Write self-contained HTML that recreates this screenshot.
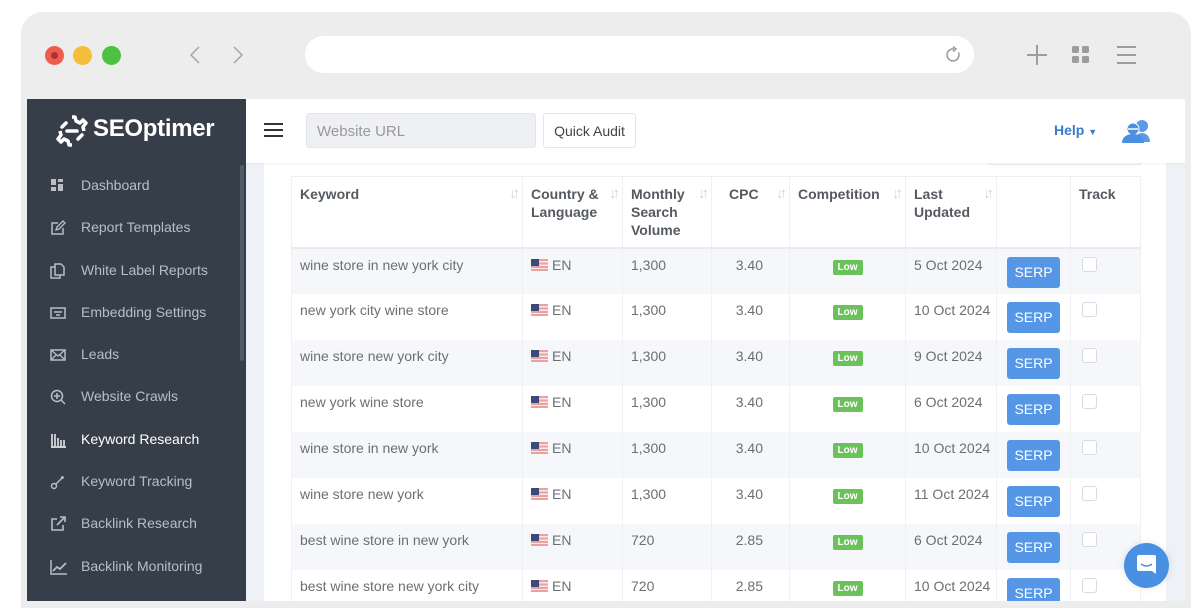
<!DOCTYPE html>
<html><head><meta charset="utf-8">
<style>
*{box-sizing:border-box;margin:0;padding:0}
html,body{width:1200px;height:608px;overflow:hidden}
body{background:#fff;font-family:"Liberation Sans",sans-serif;position:relative}
.win{position:absolute;left:21px;top:12px;width:1170px;height:596px;background:#ededed;border-radius:22px 22px 0 0}
.dot{position:absolute;top:46px;width:19px;height:19px;border-radius:50%}
.addr{position:absolute;left:305px;top:36px;width:669px;height:37px;background:#fff;border-radius:19px}
.side{position:absolute;left:27px;top:99px;width:219px;height:502px;background:#363f49}
.main{position:absolute;left:246px;top:99px;width:939px;height:502px;background:#eef1f5;overflow:hidden}
.hdr{position:absolute;left:0;top:0;width:939px;height:64px;background:#fff;box-shadow:0 1px 2px rgba(0,0,0,.06);z-index:2}
.card{position:absolute;left:18px;top:64px;width:902px;height:460px;background:#fff}
.nav{position:absolute;left:0;width:219px;height:42px;color:#b9bec5;font-size:14px;white-space:nowrap}
.nav svg{position:absolute;left:23px;top:13px}
.nav span{position:absolute;left:54px;top:12px}
table{position:absolute;left:27px;top:13px;border-collapse:collapse;table-layout:fixed;width:849px;font-size:14px;color:#6b6f74;white-space:nowrap}
th{height:68px;vertical-align:top;text-align:left;padding:8px 8px;font-weight:bold;color:#555a60;border:1px solid #eef0f2;line-height:18px;position:relative;border-bottom:2px solid #e8ebee}
td{height:46px;vertical-align:top;padding:8px 8px;border-left:1px solid #eef0f2;border-right:1px solid #eef0f2;overflow:hidden}
tr.o td{background:#f5f7fa}
.sa{position:absolute;right:6px;top:8px;color:#cfd3d7;font-size:15px;letter-spacing:-4px;font-weight:normal}
.flag{display:inline-block;width:17px;height:12px;vertical-align:-1px;margin-right:4px;background:repeating-linear-gradient(#e9a2a2 0 2px,#fbe5e5 2px 3.4px);position:relative}
.flag:before{content:"";position:absolute;left:0;top:0;width:8px;height:7px;background:#3b4a78}
.low{display:inline-block;background:#6cc25a;color:#fff;font-size:10px;font-weight:bold;padding:2px 5px;border-radius:2px;margin-top:2px}
td.s{padding:0 0 0 10px;vertical-align:top}
.serp{display:inline-block;background:#5596e6;color:#fff;font-size:14px;width:53px;height:31px;line-height:31px;text-align:center;border-radius:3px;margin-top:8px}
.cb{display:inline-block;width:15px;height:15px;border:1px solid #d7dade;border-radius:3px;background:#fff;margin-left:3px}
</style></head><body>
<div class="win"></div>
<div class="dot" style="left:45px;background:#ee5c50"><div style="position:absolute;left:6px;top:6px;width:7px;height:7px;border-radius:50%;background:#a8352d"></div></div>
<div class="dot" style="left:73px;background:#f4bd3c"></div>
<div class="dot" style="left:102px;background:#4fc03f"></div>
<svg style="position:absolute;left:188px;top:46px" width="60" height="18"><path d="M11 1L3 9L11 17" stroke="#a5a5a5" stroke-width="1.5" fill="none"/><path d="M46 1L54 9L46 17" stroke="#a5a5a5" stroke-width="1.5" fill="none"/></svg>
<div class="addr"></div>
<svg style="position:absolute;left:945px;top:46px" width="18" height="18"><path d="M13.5 6.5A6 6 0 1 1 9 3" stroke="#999" stroke-width="1.5" fill="none"/><path d="M8 0.5L11 3L8 5.5" stroke="#999" stroke-width="1.5" fill="none"/></svg>
<svg style="position:absolute;left:1026px;top:44px" width="120" height="22"><path d="M11 1V21M1 11H21" stroke="#9d9d9d" stroke-width="2"/><rect x="46" y="2" width="7" height="7" rx="1.5" fill="#9d9d9d"/><rect x="56" y="2" width="7" height="7" rx="1.5" fill="#9d9d9d"/><rect x="46" y="12" width="7" height="7" rx="1.5" fill="#9d9d9d"/><rect x="56" y="12" width="7" height="7" rx="1.5" fill="#9d9d9d"/><path d="M91 3H110M91 11H110M91 19H110" stroke="#9d9d9d" stroke-width="2"/></svg>

<div class="side">
<svg style="position:absolute;left:27px;top:14px" width="36" height="36" viewBox="0 0 36 36"><path d="M18 4 L21 4 L22 8 L26 10 L29 7 L32 10 L29 14 L30 18" stroke="#fff" stroke-width="3.5" fill="none" stroke-linejoin="round"/><path d="M18 32 L15 32 L14 28 L10 26 L7 29 L4 26 L7 22 L6 18" stroke="#fff" stroke-width="3.5" fill="none" stroke-linejoin="round"/><path d="M12 10 L8 14 M24 26 L28 22 M13 18h10" stroke="#fff" stroke-width="3.5" stroke-linecap="round"/></svg>
<div style="position:absolute;left:66px;top:16px;color:#fff;font-size:24px;font-weight:bold;letter-spacing:-0.3px">SEOptimer</div>
<div style="position:absolute;left:213px;top:66px;width:4px;height:196px;background:#525b66;border-radius:2px"></div>
<div class="nav" style="top:66px"><svg width="14" height="14"><rect x="1" y="1" width="5" height="6" fill="#b9bec5"/><rect x="8" y="1" width="5" height="3" fill="#b9bec5"/><rect x="1" y="9" width="5" height="4" fill="#b9bec5"/><rect x="8" y="6" width="5" height="7" fill="#b9bec5"/></svg><span>Dashboard</span></div>
<div class="nav" style="top:108px"><svg width="16" height="16"><path d="M13 8v6H2V3h6" stroke="#b9bec5" stroke-width="1.5" fill="none"/><path d="M6 10l1-3 6-6 2 2-6 6z" stroke="#b9bec5" stroke-width="1.3" fill="none"/></svg><span>Report Templates</span></div>
<div class="nav" style="top:151px"><svg width="16" height="16"><path d="M5 4H1v11h9v-3" stroke="#b9bec5" stroke-width="1.5" fill="none"/><path d="M5 1h6l3 3v8H5z" stroke="#b9bec5" stroke-width="1.5" fill="none"/></svg><span>White Label Reports</span></div>
<div class="nav" style="top:193px"><svg width="16" height="16"><rect x="1" y="3" width="14" height="10" stroke="#b9bec5" stroke-width="1.5" fill="none"/><path d="M4 7h8M6 10h4" stroke="#b9bec5" stroke-width="1.5"/></svg><span>Embedding Settings</span></div>
<div class="nav" style="top:235px"><svg width="16" height="16"><rect x="1" y="3" width="14" height="10" stroke="#b9bec5" stroke-width="1.5" fill="none"/><path d="M1 3l7 6 7-6M1 13l5-5M15 13l-5-5" stroke="#b9bec5" stroke-width="1.3" fill="none"/></svg><span>Leads</span></div>
<div class="nav" style="top:277px"><svg width="16" height="16"><circle cx="7" cy="7" r="5.5" stroke="#b9bec5" stroke-width="1.5" fill="none"/><path d="M11 11l4 4M7 4v6M4 7h6" stroke="#b9bec5" stroke-width="1.5"/></svg><span>Website Crawls</span></div>
<div class="nav" style="top:320px;color:#fff"><svg width="16" height="16"><path d="M1 15h15M2 2v12M5 2v12M8 6v8M11 8v6M14 8v6" stroke="#fff" stroke-width="1.4"/></svg><span>Keyword Research</span></div>
<div class="nav" style="top:362px"><svg width="16" height="16"><circle cx="4" cy="12" r="2.5" stroke="#b9bec5" stroke-width="1.4" fill="none"/><path d="M6 10l7-7M11 3h2v2" stroke="#b9bec5" stroke-width="1.4" fill="none"/></svg><span>Keyword Tracking</span></div>
<div class="nav" style="top:404px"><svg width="16" height="16"><path d="M13 9v5H2V3h5" stroke="#b9bec5" stroke-width="1.6" fill="none"/><path d="M7 9l7-7M10 1h5v5" stroke="#b9bec5" stroke-width="1.6" fill="none"/></svg><span>Backlink Research</span></div>
<div class="nav" style="top:447px"><svg width="18" height="16"><path d="M1 1v14h16" stroke="#b9bec5" stroke-width="1.5" fill="none"/><path d="M3 12l4-4 3 2 6-6" stroke="#b9bec5" stroke-width="1.8" fill="none"/></svg><span>Backlink Monitoring</span></div>
</div>

<div class="main">
<div class="card">
<div style="position:absolute;left:724px;top:-2px;width:154px;height:4px;border:1px solid #e5e8eb;border-top:none;border-radius:0 0 4px 4px"></div>
<table>
<colgroup><col style="width:231px"><col style="width:100px"><col style="width:89px"><col style="width:78px"><col style="width:116px"><col style="width:91px"><col style="width:74px"><col style="width:70px"></colgroup>
<tr><th>Keyword<span class="sa">↓↑</span></th><th>Country &amp;<br>Language<span class="sa">↓↑</span></th><th>Monthly<br>Search<br>Volume<span class="sa">↓↑</span></th><th style="padding-left:17px">CPC<span class="sa">↓↑</span></th><th>Competition<span class="sa">↓↑</span></th><th>Last<br>Updated<span class="sa">↓↑</span></th><th></th><th>Track</th></tr>
<tr class="o"><td>wine store in new york city</td><td><span class="flag"></span>EN</td><td>1,300</td><td style="text-align:right;padding-right:26px">3.40</td><td style="text-align:center"><span class="low">Low</span></td><td>5 Oct 2024</td><td class="s"><span class="serp">SERP</span></td><td><span class="cb"></span></td></tr>
<tr><td>new york city wine store</td><td><span class="flag"></span>EN</td><td>1,300</td><td style="text-align:right;padding-right:26px">3.40</td><td style="text-align:center"><span class="low">Low</span></td><td>10 Oct 2024</td><td class="s"><span class="serp">SERP</span></td><td><span class="cb"></span></td></tr>
<tr class="o"><td>wine store new york city</td><td><span class="flag"></span>EN</td><td>1,300</td><td style="text-align:right;padding-right:26px">3.40</td><td style="text-align:center"><span class="low">Low</span></td><td>9 Oct 2024</td><td class="s"><span class="serp">SERP</span></td><td><span class="cb"></span></td></tr>
<tr><td>new york wine store</td><td><span class="flag"></span>EN</td><td>1,300</td><td style="text-align:right;padding-right:26px">3.40</td><td style="text-align:center"><span class="low">Low</span></td><td>6 Oct 2024</td><td class="s"><span class="serp">SERP</span></td><td><span class="cb"></span></td></tr>
<tr class="o"><td>wine store in new york</td><td><span class="flag"></span>EN</td><td>1,300</td><td style="text-align:right;padding-right:26px">3.40</td><td style="text-align:center"><span class="low">Low</span></td><td>10 Oct 2024</td><td class="s"><span class="serp">SERP</span></td><td><span class="cb"></span></td></tr>
<tr><td>wine store new york</td><td><span class="flag"></span>EN</td><td>1,300</td><td style="text-align:right;padding-right:26px">3.40</td><td style="text-align:center"><span class="low">Low</span></td><td>11 Oct 2024</td><td class="s"><span class="serp">SERP</span></td><td><span class="cb"></span></td></tr>
<tr class="o"><td>best wine store in new york</td><td><span class="flag"></span>EN</td><td>720</td><td style="text-align:right;padding-right:26px">2.85</td><td style="text-align:center"><span class="low">Low</span></td><td>6 Oct 2024</td><td class="s"><span class="serp">SERP</span></td><td><span class="cb"></span></td></tr>
<tr><td>best wine store new york city</td><td><span class="flag"></span>EN</td><td>720</td><td style="text-align:right;padding-right:26px">2.85</td><td style="text-align:center"><span class="low">Low</span></td><td>10 Oct 2024</td><td class="s"><span class="serp">SERP</span></td><td><span class="cb"></span></td></tr>
</table>
</div>
<div class="hdr">
<svg style="position:absolute;left:18px;top:23px" width="20" height="16"><path d="M0 2H19M0 8H19M0 14H19" stroke="#333" stroke-width="2"/></svg>
<div style="position:absolute;left:60px;top:14px;width:230px;height:35px;background:#eef0f3;border:1px solid #e3e6ea;border-radius:3px;color:#999;font-size:15px;padding:9px 10px;white-space:nowrap">Website URL</div>
<div style="position:absolute;left:297px;top:14px;width:93px;height:35px;border:1px solid #e3e6ea;border-radius:3px;color:#444;font-size:14px;padding:9px 0;text-align:center;white-space:nowrap">Quick Audit</div>
<div style="position:absolute;left:808px;top:23px;color:#3a7bc8;font-size:14px;font-weight:bold;white-space:nowrap">Help <span style="font-size:9px">▼</span></div>
<svg style="position:absolute;left:875px;top:19px" width="30" height="26"><circle cx="21" cy="8" r="6" fill="#5a9be8"/><path d="M13 24c0-6 4-9 8-9s8 3 8 9z" fill="#5a9be8"/><circle cx="12" cy="11" r="6.5" fill="#fff"/><circle cx="12" cy="11" r="5.5" fill="#4a8fe0"/><path d="M7 11h10" stroke="#fff" stroke-width="1.5"/><path d="M1 25c0-6 5-9 11-9s11 3 11 9z" fill="#4a8fe0"/></svg>
</div>
</div>
<div style="position:absolute;left:1124px;top:543px;width:45px;height:45px;border-radius:50%;background:#4a90e2;box-shadow:0 0 8px rgba(0,0,0,.1)"></div>
<svg style="position:absolute;left:1136px;top:554px" width="22" height="24"><path d="M1 3a2 2 0 0 1 2-2h15a2 2 0 0 1 2 2v17l-4-3H3a2 2 0 0 1-2-2z" fill="#fff"/><path d="M5 10q5.5 4 11 0" stroke="#4a90e2" stroke-width="1.5" fill="none"/></svg>
</body></html>
